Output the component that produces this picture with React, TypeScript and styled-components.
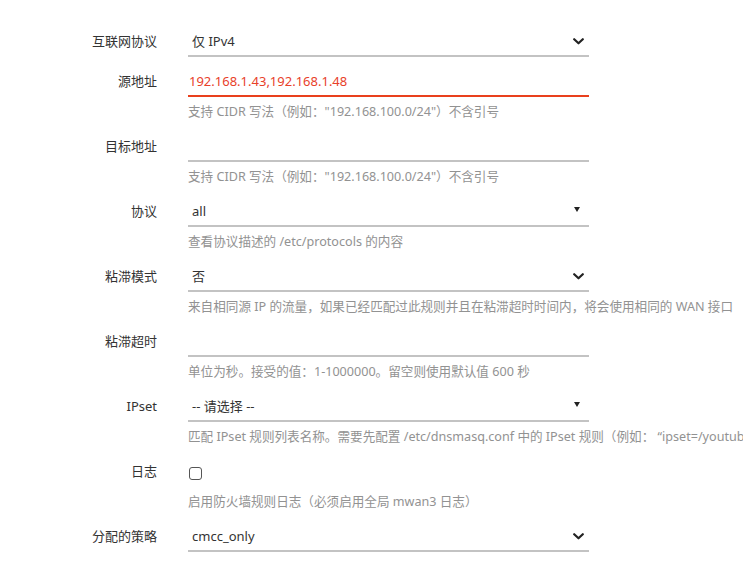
import React from "react";
import styled, { createGlobalStyle } from "styled-components";

const GlobalStyle = createGlobalStyle`
  html, body {
    margin: 0;
    padding: 0;
    background: #fff;
    overflow: hidden;
  }
  body {
    font-family: "Noto Sans", "Noto Sans CJK SC", sans-serif;
    color: #333;
  }
`;

interface FieldRow {
  id: string;
  label: string;
  kind: "select" | "dropdown" | "input" | "checkbox";
  value?: string;
  invalid?: boolean;
  hint?: string;
}

const rows: FieldRow[] = [
  { id: "family", label: "互联网协议", kind: "select", value: "仅 IPv4" },
  {
    id: "src_ip",
    label: "源地址",
    kind: "input",
    value: "192.168.1.43,192.168.1.48",
    invalid: true,
    hint: "支持 CIDR 写法（例如：\"192.168.100.0/24\"）不含引号",
  },
  {
    id: "dest_ip",
    label: "目标地址",
    kind: "input",
    value: "",
    hint: "支持 CIDR 写法（例如：\"192.168.100.0/24\"）不含引号",
  },
  {
    id: "proto",
    label: "协议",
    kind: "dropdown",
    value: "all",
    hint: "查看协议描述的 /etc/protocols 的内容",
  },
  {
    id: "sticky",
    label: "粘滞模式",
    kind: "select",
    value: "否",
    hint: "来自相同源 IP 的流量，如果已经匹配过此规则并且在粘滞超时时间内，将会使用相同的 WAN 接口",
  },
  {
    id: "timeout",
    label: "粘滞超时",
    kind: "input",
    value: "",
    hint: "单位为秒。接受的值：1-1000000。留空则使用默认值 600 秒",
  },
  {
    id: "ipset",
    label: "IPset",
    kind: "dropdown",
    value: "-- 请选择 --",
    hint: "匹配 IPset 规则列表名称。需要先配置 /etc/dnsmasq.conf 中的 IPset 规则（例如： “ipset=/youtube.com/youtube”）",
  },
  {
    id: "logging",
    label: "日志",
    kind: "checkbox",
    hint: "启用防火墙规则日志（必须启用全局 mwan3 日志）",
  },
  { id: "use_policy", label: "分配的策略", kind: "select", value: "cmcc_only" },
];

const Chevron = () => (
  <svg width="11" height="7" viewBox="0 0 11 7">
    <polyline
      points="1.2,1.2 5.5,5.3 9.8,1.2"
      fill="none"
      stroke="#222"
      strokeWidth="2.2"
      strokeLinecap="round"
      strokeLinejoin="round"
    />
  </svg>
);

const App = (): JSX.Element => {
  return (
    <>
      <GlobalStyle />
      <Form>
        {rows.map((row) => (
          <Row key={row.id}>
            <Label htmlFor={row.id}>{row.label}</Label>
            <Field>
              {row.kind === "input" && (
                <TextInput id={row.id} defaultValue={row.value} $invalid={row.invalid} />
              )}
              {row.kind === "select" && (
                <SelectWrap>
                  <Select id={row.id} defaultValue={row.value}>
                    <option>{row.value}</option>
                  </Select>
                  <SelectIcon>
                    <Chevron />
                  </SelectIcon>
                </SelectWrap>
              )}
              {row.kind === "dropdown" && (
                <Dropdown id={row.id}>
                  <DropdownValue>{row.value}</DropdownValue>
                  <DropdownCaret />
                </Dropdown>
              )}
              {row.kind === "checkbox" && (
                <CheckWrap>
                  <Checkbox id={row.id} type="checkbox" />
                </CheckWrap>
              )}
              {row.hint && <Hint>{row.hint}</Hint>}
            </Field>
          </Row>
        ))}
      </Form>
    </>
  );
};

const Form = styled.div`
  padding-top: 27px;
  display: flex;
  flex-direction: column;
  gap: 10px;
`;

const Row = styled.div`
  display: grid;
  grid-template-columns: 157px 401px;
  column-gap: 31px;
  align-items: start;
`;

const Label = styled.label`
  height: 30px;
  line-height: 29px;
  text-align: right;
  font-size: 13px;
  color: #333;
  white-space: nowrap;
`;

const Field = styled.div`
  min-width: 0;
`;

const baseControl = `
  box-sizing: border-box;
  width: 100%;
  height: 30px;
  margin: 0;
  border: none;
  border-bottom: 2px solid #c3c3c3;
  border-radius: 0;
  background: transparent;
  font-family: "Noto Sans", "Noto Sans CJK SC", sans-serif;
  font-size: 13px;
  color: #333;
  outline: none;
`;

const TextInput = styled.input<{ $invalid?: boolean }>`
  ${baseControl}
  padding: 0 0 1px 1px;
  color: ${(p) => (p.$invalid ? "#e8412a" : "#333")};
  border-bottom-color: ${(p) => (p.$invalid ? "#e9401d" : "#c3c3c3")};
`;

const SelectWrap = styled.div`
  position: relative;
`;

const Select = styled.select`
  ${baseControl}
  appearance: none;
  padding: 0 24px 1px 4px;
`;

const SelectIcon = styled.span`
  position: absolute;
  right: 5px;
  top: 11px;
  display: flex;
  pointer-events: none;
`;

const Dropdown = styled.div`
  ${baseControl}
  display: flex;
  align-items: center;
  justify-content: space-between;
  padding: 0 9px 1px 4px;
  cursor: pointer;
`;

const DropdownValue = styled.span`
  white-space: nowrap;
`;

const DropdownCaret = styled.span`
  width: 0;
  height: 0;
  margin-top: -2px;
  border-left: 3px solid transparent;
  border-right: 3px solid transparent;
  border-top: 5px solid #222;
`;

const CheckWrap = styled.div`
  height: 30px;
  display: flex;
  align-items: center;
`;

const Checkbox = styled.input`
  appearance: none;
  box-sizing: border-box;
  width: 13px;
  height: 13px;
  margin: 2px 0 0 1px;
  border: 1px solid #555;
  border-radius: 3px;
  background: #fff;
`;

const Hint = styled.div`
  margin-top: 5px;
  line-height: 20px;
  font-size: 12.6px;
  color: #929292;
  white-space: nowrap;
`;

export default App;
